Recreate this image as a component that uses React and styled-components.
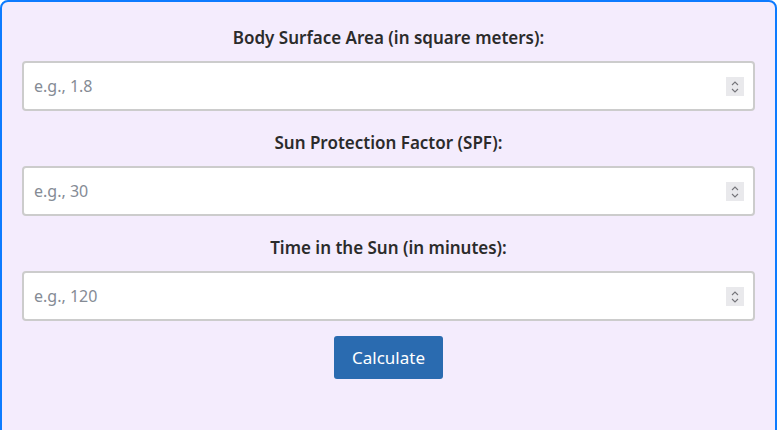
import React, { useState } from 'react';
import styled, { createGlobalStyle } from 'styled-components';

const GlobalStyle = createGlobalStyle`
  html, body {
    margin: 0;
    padding: 0;
    background: #ffffff;
    overflow: hidden;
  }
  body {
    font-family: "Noto Sans", "Open Sans", "Liberation Sans", sans-serif;
  }
`;

const Contain = styled.div`
  box-sizing: border-box;
  width: 100%;
  height: 440px;
  border: 2px solid #0d7bff;
  border-radius: 8px;
  background-color: #f4ecfd;
  padding: 24px 20px;
`;

const Form = styled.form`
  display: flex;
  flex-direction: column;
  align-items: stretch;
`;

const Group = styled.div`
  display: flex;
  flex-direction: column;
  margin-bottom: ${(p) => (p.$last ? '15px' : '20px')};
`;

const Label = styled.label`
  display: block;
  text-align: center;
  font-size: 17px;
  font-weight: 600;
  line-height: 24px;
  color: #2b2b2b;
  margin-bottom: 11px;
`;

const Field = styled.div`
  position: relative;
`;

const Input = styled.input`
  box-sizing: border-box;
  width: 100%;
  height: 50px;
  border: 2px solid #cccccc;
  border-radius: 4px;
  background: #ffffff;
  padding: 0 10px;
  font-family: inherit;
  font-size: 16px;
  color: #333;
  outline: none;
  -moz-appearance: textfield;

  &::placeholder {
    color: #858b95;
  }
  &::-webkit-inner-spin-button,
  &::-webkit-outer-spin-button {
    -webkit-appearance: none;
    margin: 0;
  }
`;

const Spinner = styled.span`
  position: absolute;
  right: 11px;
  top: 16px;
  width: 18px;
  height: 19px;
  background: #e9e9ec;
  display: flex;
  align-items: center;
  justify-content: center;
  pointer-events: none;
`;

const Button = styled.button`
  align-self: center;
  width: 109px;
  height: 43px;
  border: none;
  border-radius: 3px;
  background-color: #2a6bb0;
  color: #ffffff;
  font-family: inherit;
  font-size: 17px;
  cursor: pointer;
`;

const SpinIcon = () => (
  <svg width="10" height="14" viewBox="0 0 10 14" fill="none" stroke="#75757a" strokeWidth="1.1">
    <path d="M2 5 L5 2 L8 5" />
    <path d="M2 9 L5 12 L8 9" />
  </svg>
);

const fields = [
  { id: 'bsa', label: 'Body Surface Area (in square meters):', placeholder: 'e.g., 1.8' },
  { id: 'spf', label: 'Sun Protection Factor (SPF):', placeholder: 'e.g., 30' },
  { id: 'time', label: 'Time in the Sun (in minutes):', placeholder: 'e.g., 120' },
];

const App = () => {
  const [values, setValues] = useState({ bsa: '', spf: '', time: '' });

  return (
    <>
      <GlobalStyle />
      <Contain>
        <Form onSubmit={(e) => e.preventDefault()}>
          {fields.map((f, i) => (
            <Group key={f.id} $last={i === fields.length - 1}>
              <Label htmlFor={f.id}>{f.label}</Label>
              <Field>
                <Input
                  id={f.id}
                  type="number"
                  placeholder={f.placeholder}
                  value={values[f.id]}
                  onChange={(e) => setValues({ ...values, [f.id]: e.target.value })}
                />
                <Spinner>
                  <SpinIcon />
                </Spinner>
              </Field>
            </Group>
          ))}
          <Button type="submit">Calculate</Button>
        </Form>
      </Contain>
    </>
  );
};

export default App;
